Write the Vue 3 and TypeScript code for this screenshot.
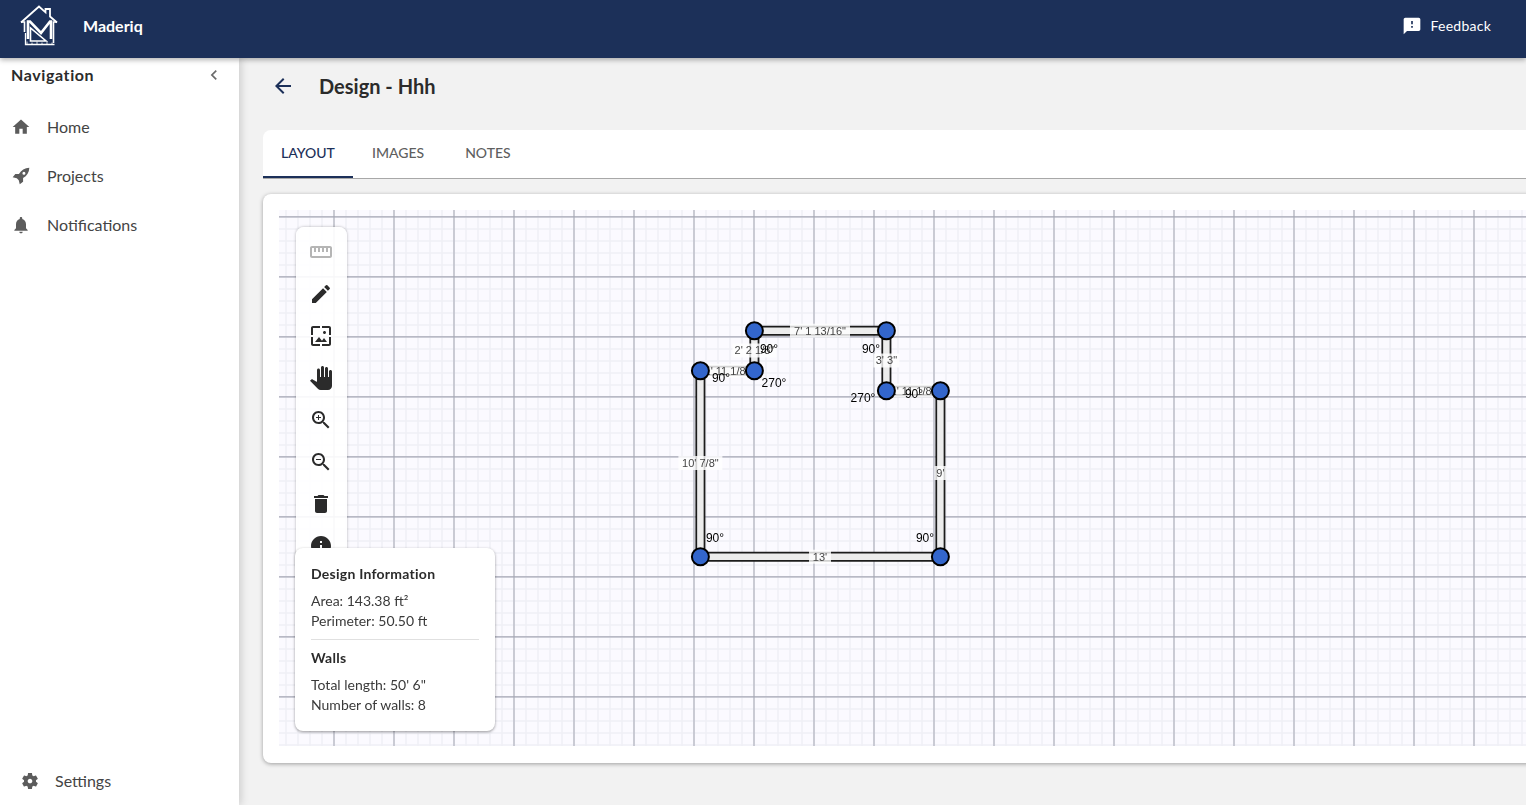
<script setup lang="ts">
interface Wall {
  x1: number;
  y1: number;
  x2: number;
  y2: number;
}

interface Label {
  x: number;
  y: number;
  text: string;
  w: number;
}

const OX = 279;
const OY = 210;

const navItems = [
  {
    label: "Home",
    d: "M10 20v-6h4v6h5v-8h3L12 3 2 12h3v8z",
  },
  {
    label: "Projects",
    d: "M22 2c-5.5.2-9.8 2.8-12.5 7.5H5.2L2 13.5l5 1.2 2.3 2.3 1.2 5 4-3.2v-4.3C19.2 11.8 21.8 7.5 22 2zM15.5 6.8a1.8 1.8 0 1 1 0 3.6 1.8 1.8 0 0 1 0-3.6z",
  },
  {
    label: "Notifications",
    d: "M12 22c1.1 0 2-.9 2-2h-4c0 1.1.89 2 2 2zm6-6v-5c0-3.07-1.64-5.64-4.5-6.32V4c0-.83-.67-1.5-1.5-1.5s-1.5.67-1.5 1.5v.68C7.63 5.36 6 7.92 6 11v5l-2 2v1h16v-1l-2-2z",
  },
];

const tools = [
  {
    name: "measure",
    disabled: true,
    d: "M21 6H3c-1.1 0-2 .9-2 2v8c0 1.1.9 2 2 2h18c1.1 0 2-.9 2-2V8c0-1.1-.9-2-2-2zm0 10H3V8h2v4h2V8h2v4h2V8h2v4h2V8h2v4h2V8h2v8z",
  },
  {
    name: "edit",
    d: "M3 17.25V21h3.75L17.81 9.94l-3.75-3.75L3 17.25zM20.71 7.04c.39-.39.39-1.02 0-1.41l-2.34-2.34a.9959.9959 0 0 0-1.41 0l-1.83 1.83 3.75 3.75 1.83-1.83z",
  },
  {
    name: "background",
    d: "M4 4h7V2H4c-1.1 0-2 .9-2 2v7h2V4zm6 9l-4 5h12l-3-4-2.03 2.71L10 13zm7-4.5c0-.83-.67-1.5-1.5-1.5S14 7.67 14 8.5s.67 1.5 1.5 1.5S17 9.33 17 8.5zM20 2h-7v2h7v7h2V4c0-1.1-.9-2-2-2zm0 18h-7v2h7c1.1 0 2-.9 2-2v-7h-2v7zM4 13H2v7c0 1.1.9 2 2 2h7v-2H4v-7z",
  },
  {
    name: "pan",
    d: "M23 5.5V20c0 2.2-1.8 4-4 4h-7.3c-1.08 0-2.1-.43-2.85-1.19L1 14.83s1.26-1.23 1.3-1.25c.22-.19.49-.29.79-.29.22 0 .42.06.6.16.04.01 4.31 2.46 4.31 2.46V4c0-.83.67-1.5 1.5-1.5S11 3.17 11 4v7h1V1.5c0-.83.67-1.5 1.5-1.5S15 .67 15 1.5V11h1V2.5c0-.83.67-1.5 1.5-1.5s1.5.67 1.5 1.5V11h1V5.5c0-.83.67-1.5 1.5-1.5s1.5.67 1.5 1.5z",
  },
  {
    name: "zoom-in",
    d: "M15.5 14h-.79l-.28-.27C15.41 12.59 16 11.11 16 9.5 16 5.91 13.09 3 9.5 3S3 5.91 3 9.5 5.91 16 9.5 16c1.61 0 3.09-.59 4.23-1.57l.27.28v.79l5 4.99L20.49 19l-4.99-5zm-6 0C7.01 14 5 11.99 5 9.5S7.01 5 9.5 5 14 7.01 14 9.5 11.99 14 9.5 14zm2.5-4h-2v2H9v-2H7V9h2V7h1v2h2v1z",
  },
  {
    name: "zoom-out",
    d: "M15.5 14h-.79l-.28-.27C15.41 12.59 16 11.11 16 9.5 16 5.91 13.09 3 9.5 3S3 5.91 3 9.5 5.91 16 9.5 16c1.61 0 3.09-.59 4.23-1.57l.27.28v.79l5 4.99L20.49 19l-4.99-5zm-6 0C7.01 14 5 11.99 5 9.5S7.01 5 9.5 5 14 7.01 14 9.5 11.99 14 9.5 14zM7 9h5v1H7z",
  },
  {
    name: "delete",
    d: "M6 19c0 1.1.9 2 2 2h8c1.1 0 2-.9 2-2V7H6v12zM19 4h-3.5l-1-1h-5l-1 1H5v2h14V4z",
  },
  {
    name: "info",
    d: "M12 2C6.48 2 2 6.48 2 12s4.48 10 10 10 10-4.48 10-10S17.52 2 12 2zm1 15h-2v-6h2v6zm0-8h-2V7h2v2z",
  },
];

// corner points of the room, in page pixels
const points = [
  [754, 330],
  [886, 330],
  [886, 390],
  [940, 390],
  [940, 556],
  [700, 556],
  [700, 370],
  [754, 370],
].map(([x, y]) => ({ x: x - OX + 0.4, y: y - OY + 0.7 }));

const walls: Wall[] = points.map((p, i) => {
  const n = points[(i + 1) % points.length];
  return { x1: p.x, y1: p.y, x2: n.x, y2: n.y };
});

const lengths: Label[] = [
  { x: 820, y: 330.7, text: "7' 1 13/16\"", w: 60 },
  { x: 886.4, y: 360.5, text: "3' 3\"", w: 26 },
  { x: 913, y: 390.7, text: "1' 11 1/8\"", w: 48 },
  { x: 940.4, y: 473, text: "9'", w: 12 },
  { x: 820, y: 556.7, text: "13'", w: 22 },
  { x: 700.4, y: 463, text: "10' 7/8\"", w: 44 },
  { x: 727, y: 370.7, text: "1' 11 1/8\"", w: 48 },
  { x: 754.4, y: 350.5, text: "2' 2 1/8\"", w: 44 },
].map((l) => ({ ...l, x: l.x - OX, y: l.y - OY }));

const angles = [
  { x: 769, y: 349, text: "90°" },
  { x: 871, y: 349, text: "90°" },
  { x: 863, y: 397.5, text: "270°" },
  { x: 914, y: 394, text: "90°" },
  { x: 925, y: 538, text: "90°" },
  { x: 715, y: 538, text: "90°" },
  { x: 721, y: 378, text: "90°" },
  { x: 774, y: 383, text: "270°" },
].map((a) => ({ ...a, x: a.x - OX, y: a.y - OY }));
</script>

<template>
  <div class="app">
    <header class="topbar">
      <div class="brand">
        <svg class="logo" viewBox="0 0 38 42" fill="none" stroke="#fff">
          <!-- roof and walls -->
          <path d="M1 17.5 19 1.5l6.5 5.8V4h4.5v7.5l7 6" stroke-width="1.8" />
          <path d="M1 17h3.5v10M37 17h-3.5v21" stroke-width="1.6" />
          <!-- M -->
          <path d="M8 34V16.5h2L21 28l9-11.5h1V34" stroke-width="2.6" />
          <!-- set square -->
          <path d="M10.5 23v13H26L10.5 23z" stroke-width="1.6" />
          <!-- rulers -->
          <path d="M5.5 28v11.5H34.5" stroke-width="1.3" />
          <path d="M7 36.5v3M12 37.5v2M17 36.5v3M22 37.5v2M27 36.5v3M32 37.5v2" stroke-width=".8" />
        </svg>
        <span class="brand-name">Maderiq</span>
      </div>
      <button class="feedback">
        <svg class="icon-feedback" viewBox="0 0 24 24" fill="currentColor">
          <path d="M20 2H4c-1.1 0-1.99.9-1.99 2L2 22l4-4h14c1.1 0 2-.9 2-2V4c0-1.1-.9-2-2-2zm-7 12h-2v-2h2v2zm0-4h-2V6h2v4z" />
        </svg>
        <span class="feedback-text">Feedback</span>
      </button>
    </header>

    <div class="body">
      <aside class="sidebar">
        <div class="nav-head">
          <span class="nav-title">Navigation</span>
          <svg class="collapse" viewBox="0 0 24 24" fill="currentColor">
            <path d="M15.41 7.41 14 6l-6 6 6 6 1.41-1.41L10.83 12z" />
          </svg>
        </div>
        <nav class="nav-list">
          <a v-for="item in navItems" :key="item.label" class="nav-item">
            <svg class="nav-icon" viewBox="0 0 24 24" fill="currentColor" fill-rule="evenodd">
              <path :d="item.d" />
            </svg>
            {{ item.label }}
          </a>
        </nav>
        <a class="settings">
          <svg class="nav-icon" viewBox="0 0 24 24" fill="currentColor" fill-rule="evenodd">
            <path d="M19.14 12.94c.04-.3.06-.61.06-.94 0-.32-.02-.64-.07-.94l2.03-1.58c.18-.14.23-.41.12-.61l-1.92-3.32c-.12-.22-.37-.29-.59-.22l-2.39.96c-.5-.38-1.03-.7-1.62-.94l-.36-2.54c-.04-.24-.24-.41-.48-.41h-3.84c-.24 0-.43.17-.47.41l-.36 2.54c-.59.24-1.13.57-1.62.94l-2.39-.96c-.22-.08-.47 0-.59.22L2.74 8.87c-.12.21-.08.47.12.61l2.03 1.58c-.05.3-.09.63-.09.94s.02.64.07.94l-2.03 1.58c-.18.14-.23.41-.12.61l1.92 3.32c.12.22.37.29.59.22l2.39-.96c.5.38 1.03.7 1.62.94l.36 2.54c.05.24.24.41.48.41h3.84c.24 0 .44-.17.47-.41l.36-2.54c.59-.24 1.13-.56 1.62-.94l2.39.96c.22.08.47 0 .59-.22l1.92-3.32c.12-.22.07-.47-.12-.61l-2.01-1.58zM12 14.8c-1.54 0-2.8-1.26-2.8-2.8s1.26-2.8 2.8-2.8 2.8 1.26 2.8 2.8-1.26 2.8-2.8 2.8z" />
          </svg>
          Settings
        </a>
      </aside>

      <main class="main">
        <div class="title-row">
          <svg class="back" viewBox="0 0 24 24" fill="currentColor">
            <path d="M20 11H7.83l5.59-5.59L12 4l-8 8 8 8 1.41-1.41L7.83 13H20v-2z" />
          </svg>
          <h1 class="title">Design - Hhh</h1>
        </div>

        <div class="tabs">
          <div class="tab active">LAYOUT</div>
          <div class="tab">IMAGES</div>
          <div class="tab">NOTES</div>
        </div>

        <section class="card">
          <div class="canvas">
            <svg class="drawing" width="100%" height="100%">
              <defs>
                <pattern id="minor" x="6" y="6" width="12" height="12" patternUnits="userSpaceOnUse">
                  <path d="M0 1H12M1 0V12" stroke="#f0eff6" stroke-width="1.5" fill="none" />
                </pattern>
                <pattern id="major" x="54" y="6" width="60" height="60" patternUnits="userSpaceOnUse">
                  <path d="M1 0V60" stroke="#bcbdc9" stroke-width="1.5" fill="none" />
                  <path d="M0 .9H60" stroke="#a4a6b4" stroke-width="1.2" fill="none" />
                </pattern>
              </defs>
              <rect width="100%" height="100%" fill="#fbfaff" />
              <rect width="100%" height="100%" fill="url(#minor)" />
              <rect width="100%" height="100%" fill="url(#major)" />

              <line
                v-for="(w, i) in walls"
                :key="'o' + i"
                :x1="w.x1"
                :y1="w.y1"
                :x2="w.x2"
                :y2="w.y2"
                stroke="#1c1c1c"
                stroke-width="10"
              />
              <line
                v-for="(w, i) in walls"
                :key="'i' + i"
                :x1="w.x1"
                :y1="w.y1"
                :x2="w.x2"
                :y2="w.y2"
                stroke="#ececec"
                stroke-width="6.5"
              />

              <g v-for="l in lengths" :key="l.text + l.x">
                <rect :x="l.x - l.w / 2" :y="l.y - 7" :width="l.w" height="14" fill="#fff" fill-opacity="0.8" />
                <text :x="l.x" :y="l.y + 3.8" text-anchor="middle" class="len">{{ l.text }}</text>
              </g>

              <circle v-for="(p, i) in points" :key="'p' + i" :cx="p.x" :cy="p.y" r="8.5" fill="#3366cc" stroke="#000" stroke-width="2" />

              <text v-for="(a, i) in angles" :key="'a' + i" :x="a.x" :y="a.y + 4" text-anchor="middle" class="angle">{{ a.text }}</text>
            </svg>

            <div class="toolbar">
              <button v-for="t in tools" :key="t.name" class="tool" :class="{ disabled: t.disabled }">
                <svg viewBox="0 0 24 24" fill="currentColor"><path :d="t.d" /></svg>
              </button>
            </div>

            <div class="info">
              <h3>Design Information</h3>
              <p class="first">Area: 143.38 ft²</p>
              <p>Perimeter: 50.50 ft</p>
              <hr />
              <h3>Walls</h3>
              <p class="first">Total length: 50' 6"</p>
              <p>Number of walls: 8</p>
            </div>
          </div>
        </section>
      </main>
    </div>
  </div>
</template>

<style>
html,
body {
  margin: 0;
  overflow: hidden;
}
</style>

<style scoped>
.app {
  height: 805px;
  display: flex;
  flex-direction: column;
  overflow: hidden;
  background: #f2f2f2;
  color: #2b2b2b;
  font-family: Lato, "Noto Sans", sans-serif;
}

.topbar {
  height: 58px;
  flex-shrink: 0;
  box-sizing: border-box;
  background: #1c3059;
  color: #fff;
  display: flex;
  align-items: center;
  justify-content: space-between;
  padding: 0 35px 6px 20px;
  box-shadow: 0 2px 5px rgba(0, 0, 0, 0.3);
  position: relative;
  z-index: 2;
}

.brand {
  display: flex;
  align-items: center;
  gap: 25px;
}

.logo {
  width: 38px;
  height: 42px;
}

.brand-name {
  font-size: 16px;
  font-weight: 700;
  margin-bottom: 2px;
}

.feedback {
  display: flex;
  align-items: center;
  gap: 8px;
  background: none;
  border: none;
  color: #fff;
  font: inherit;
  font-size: 14px;
  letter-spacing: 0.25px;
  padding: 0;
}

.feedback-text {
  margin-bottom: 2px;
}

.icon-feedback {
  width: 20px;
  height: 20px;
}

.body {
  flex: 1;
  display: flex;
  min-height: 0;
}

.sidebar {
  width: 239px;
  flex-shrink: 0;
  background: #fff;
  box-shadow: 2px 0 8px rgba(0, 0, 0, 0.16);
  display: flex;
  flex-direction: column;
  position: relative;
  z-index: 1;
}

.nav-head {
  height: 34px;
  padding: 0 15px 0 11px;
  display: flex;
  align-items: center;
  justify-content: space-between;
}

.nav-title {
  font-size: 16px;
  font-weight: 700;
  letter-spacing: 0.6px;
  margin-bottom: 2px;
}

.collapse {
  width: 20px;
  height: 20px;
  color: #6b6b6b;
}

.nav-list {
  display: flex;
  flex-direction: column;
  gap: 25px;
  padding: 22px 0 0 11px;
}

.nav-item,
.settings {
  display: flex;
  align-items: center;
  gap: 16px;
  height: 24px;
  font-size: 16px;
  color: #444;
}

.nav-icon {
  width: 20px;
  height: 20px;
  margin-top: 2px;
  color: #5c5c5c;
}

.settings {
  margin-top: auto;
  margin-bottom: 13px;
  padding-left: 20px;
  gap: 15px;
}

.main {
  width: 1400px;
  flex-shrink: 0;
  padding: 0 0 0 24px;
  box-sizing: border-box;
}

.title-row {
  height: 56px;
  margin-bottom: 16px;
  display: flex;
  align-items: center;
  gap: 24px;
  padding-left: 8px;
}

.back {
  width: 24px;
  height: 24px;
  color: #1c3059;
}

.title {
  margin: 0;
  font-size: 20px;
  font-weight: 700;
}

.tabs {
  display: flex;
  height: 49px;
  box-sizing: border-box;
  background: #fff;
  border-radius: 8px 0 0 0;
  border-bottom: 1px solid #a8a8a8;
}

.tab {
  display: flex;
  align-items: center;
  justify-content: center;
  height: 48px;
  box-sizing: border-box;
  padding: 0 18px 2px;
  font-size: 14px;
  font-weight: 500;
  color: #5f5f5f;
  margin-right: 5px;
  border-bottom: 2px solid transparent;
}

.tab.active {
  color: #1c3059;
  margin-right: 1px;
  border-bottom-color: #1c3059;
}

.card {
  margin-top: 15px;
  height: 569px;
  box-sizing: border-box;
  background: #fff;
  border-radius: 8px 0 0 8px;
  padding: 16px 0 17px 16px;
  box-shadow: 0 1px 4px rgba(0, 0, 0, 0.35);
}

.canvas {
  position: relative;
  height: 100%;
  overflow: hidden;
}

.drawing {
  display: block;
  will-change: transform;
}

.len {
  font-family: "Liberation Sans", Arial, sans-serif;
  font-size: 11px;
  fill: #444;
}

.angle {
  font-family: "Liberation Sans", Arial, sans-serif;
  font-size: 12px;
  fill: #000;
}

.toolbar {
  position: absolute;
  left: 17px;
  top: 17px;
  width: 51px;
  box-sizing: border-box;
  padding: 4px 1px 4px 0;
  display: flex;
  flex-direction: column;
  background: rgba(255, 255, 255, 0.9);
  border-radius: 8px;
  box-shadow: 0 0 3px rgba(0, 0, 0, 0.3);
}

.tool {
  height: 42px;
  padding: 0;
  border: none;
  background: none;
  color: #2b2b2b;
  display: flex;
  align-items: center;
  justify-content: center;
}

.tool svg {
  width: 24px;
  height: 24px;
}

.tool.disabled {
  color: #b5b5b5;
}

.info {
  position: absolute;
  left: 16px;
  bottom: 15px;
  width: 200px;
  height: 183px;
  box-sizing: border-box;
  padding: 16px;
  background: #fff;
  border-radius: 8px;
  box-shadow: 0 1px 3px rgba(0, 0, 0, 0.4);
  font-size: 14px;
  line-height: 20px;
  color: #3a3a3a;
}

.info h3 {
  margin: 0;
  font-size: 14px;
  line-height: 20px;
  font-weight: 700;
  letter-spacing: 0.25px;
  color: #2b2b2b;
}

.info p {
  margin: 0;
}

.info p.first {
  margin-top: 7px;
}

.info hr {
  margin: 8px 0;
  border: none;
  border-top: 1px solid #e0e0e0;
}
</style>
